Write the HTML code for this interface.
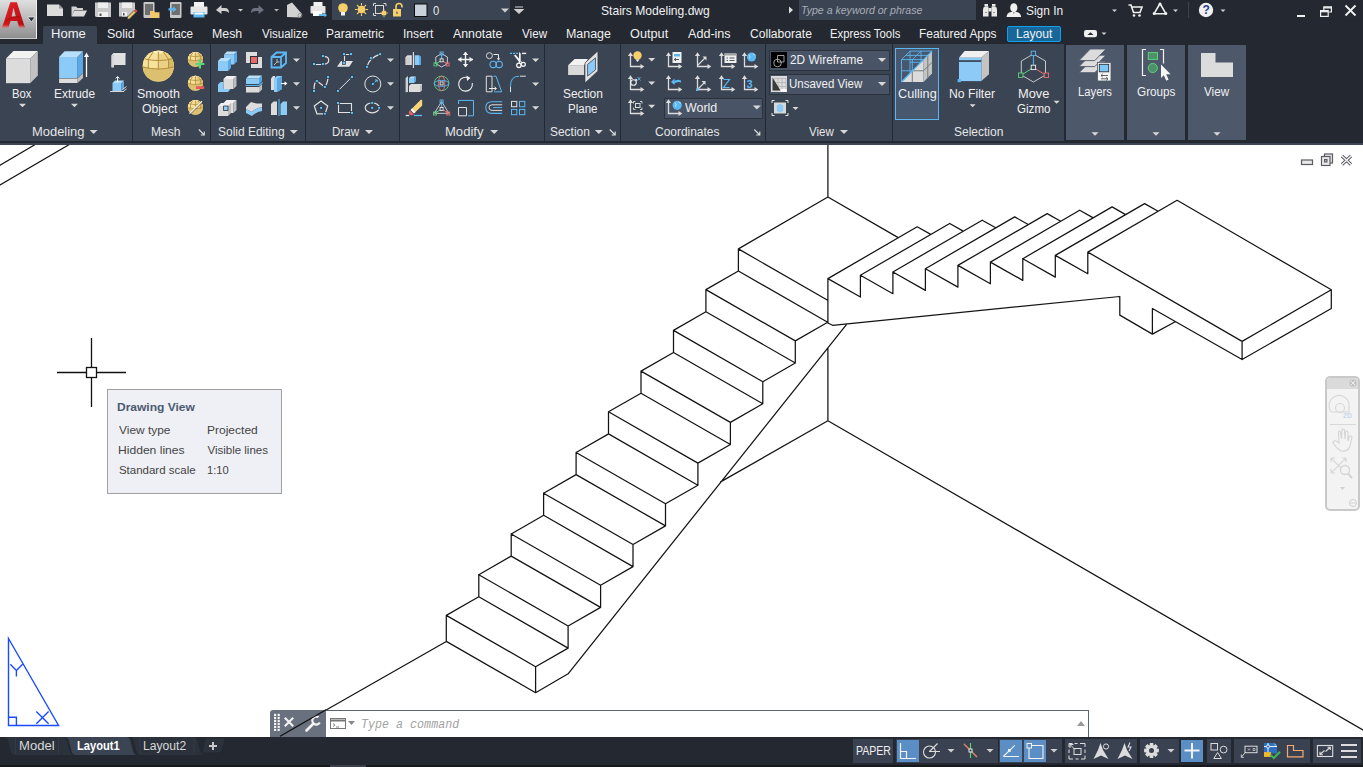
<!DOCTYPE html><html><head><meta charset="utf-8"><title>Stairs Modeling.dwg</title><style>
*{margin:0;padding:0;box-sizing:border-box}
html,body{width:1363px;height:767px;overflow:hidden;background:#232831;font-family:"Liberation Sans",sans-serif}
.a{position:absolute}
.t{position:absolute;white-space:nowrap;line-height:1.117;transform-origin:0 0;font-family:"Liberation Sans",sans-serif}
svg{position:absolute;overflow:visible}
</style></head><body>
<div class="a" style="left:0;top:145px;width:1363px;height:592px;background:#fff;overflow:hidden">
<svg width="1363" height="592" style="left:0;top:0"><path d="M446.3 470.4L535.6 521.7 M446.3 470.4L446.3 496.4 M446.3 496.4L535.6 547.7 M446.3 470.4L478.8 451.8 M535.6 521.7L535.6 547.7 M535.6 521.7L568.1 503.1 M478.8 429.7L568.1 481.0 M478.8 429.7L478.8 451.8 M478.8 451.8L568.1 503.1 M478.8 429.7L511.2 411.1 M568.1 481.0L568.1 503.1 M568.1 481.0L600.6 462.4 M511.2 389.0L600.6 440.3 M511.2 389.0L511.2 411.1 M511.2 411.1L600.6 462.4 M511.2 389.0L543.7 370.3 M600.6 440.3L600.6 462.4 M600.6 440.3L633.0 421.6 M543.6 348.2L633.0 399.5 M543.6 348.2L543.6 370.3 M543.6 370.3L633.0 421.6 M543.6 348.2L576.1 329.6 M633.0 399.5L633.0 421.6 M633.0 399.5L665.5 380.9 M576.1 307.5L665.5 358.8 M576.1 307.5L576.1 329.6 M576.1 329.6L665.5 380.9 M576.1 307.5L608.6 288.9 M665.5 358.8L665.5 380.9 M665.5 358.8L697.9 340.2 M608.5 266.8L697.9 318.1 M608.5 266.8L608.5 288.9 M608.5 288.9L697.9 340.2 M608.5 266.8L641.0 248.2 M697.9 318.1L697.9 340.2 M697.9 318.1L730.4 299.5 M641.0 226.1L730.4 277.4 M641.0 226.1L641.0 248.2 M641.0 248.2L730.4 299.5 M641.0 226.1L673.5 207.5 M730.4 277.4L730.4 299.5 M730.4 277.4L762.8 258.8 M673.5 185.4L762.8 236.7 M673.5 185.4L673.5 207.5 M673.5 207.5L762.8 258.8 M673.5 185.4L705.9 166.7 M762.8 236.7L762.8 258.8 M762.8 236.7L795.3 218.0 M705.9 144.6L795.3 195.9 M705.9 144.6L705.9 166.7 M705.9 166.7L795.3 218.0 M705.9 144.6L738.4 126.0 M795.3 195.9L795.3 218.0 M795.3 195.9L827.7 177.3 M738.4 103.9L827.7 155.2 M738.4 103.9L738.4 126.0 M738.4 126.0L827.7 177.3 M738.4 103.9L827.9 52.0 M827.9 52.0L898.2 92.6 M827.9 133.6L827.9 178.0 M827.9 178.0L832.6 180.3 M535.6 547.7L568.1 528.8 M568.1 528.8L847.0 178.9 M827.9 133.6L917.2 81.8 M827.9 133.6L860.4 152.0 M860.4 152.0L860.4 130.3 M917.2 81.8L930.7 89.4 M860.4 130.3L949.7 78.5 M860.4 130.3L892.9 148.7 M892.9 148.7L892.9 127.0 M949.7 78.5L963.2 86.1 M892.9 127.0L982.2 75.2 M892.9 127.0L925.4 145.4 M925.4 145.4L925.4 123.7 M982.2 75.2L995.7 82.8 M925.4 123.7L1014.7 71.9 M925.4 123.7L957.9 142.1 M957.9 142.1L957.9 120.4 M1014.7 71.9L1028.2 79.5 M957.9 120.4L1047.2 68.6 M957.9 120.4L990.4 138.8 M990.4 138.8L990.4 117.1 M1047.2 68.6L1060.7 76.2 M990.4 117.1L1079.7 65.2 M990.4 117.1L1022.8 135.4 M1022.8 135.4L1022.8 113.7 M1079.7 65.2L1093.2 72.9 M1022.8 113.7L1112.1 61.9 M1022.8 113.7L1055.3 132.1 M1055.3 132.1L1055.3 110.4 M1112.1 61.9L1125.6 69.6 M1055.3 110.4L1144.6 58.6 M1055.3 110.4L1087.8 128.8 M1087.8 128.8L1087.8 107.1 M1144.6 58.6L1158.1 66.3 M1087.8 107.1L1177.1 55.3 M1177.1 55.3L1331.3 144.8 M1331.3 144.8L1242.1 196.4 M1242.1 196.4L1087.8 107.1 M1331.3 144.8L1331.3 163.5 M1242.1 196.4L1242.1 214.5 M1242.1 214.5L1331.3 163.5 M1242.1 214.5L1152.4 163.5 M832.6 180.3L1119.8 151.5 M1119.8 151.5L1119.8 170.1 M1119.8 170.1L1152.4 189.1 M1152.4 189.1L1152.4 163.5 M1152.4 189.1L1175.2 176.7 M827.9 0.0L827.9 52.0 M827.9 202.9L827.9 275.8 M827.9 275.8L720.6 336.9 M827.9 275.8L1383.0 596.6 M446.3 496.5L280.1 591.3 M0.0 20.3L35.2 -0.5 M0.0 40.0L69.3 -0.5" fill="none" stroke="#141414" stroke-width="1.25" stroke-linecap="round"/></svg>
</div>
<svg width="1363" height="767" style="left:0;top:0"><path d="M57 372.5H86.5M96.5 372.5H126M91.5 338V367.5M91.5 377.5V407" stroke="#111" stroke-width="1.3" fill="none"/><rect x="86.5" y="367.5" width="10" height="10" fill="none" stroke="#111" stroke-width="1.3"/><path d="M8.5 638.5V725.5H58.6Z M8.5 717.3H16.4V725.5 M10.3 664.2L16.4 670.4L22.6 664.2 M16.4 670.4V676.6 M36.3 711.5L48.6 723.8 M48.6 711.5L36.3 723.8" fill="none" stroke="#1a4cff" stroke-width="1.4" stroke-linejoin="miter"/><rect x="1301.5" y="160" width="11" height="4.5" fill="#e8e8e8" stroke="#5a5a64" stroke-width="1.2"/><rect x="1324.5" y="154" width="8" height="9" fill="#e8e8e8" stroke="#5a5a64" stroke-width="1.2"/><rect x="1321.5" y="156.5" width="8.5" height="9" fill="#e8e8e8" stroke="#5a5a64" stroke-width="1.2"/><rect x="1324.5" y="159.5" width="2.5" height="2.5" fill="#aaa" stroke="#5a5a64" stroke-width="1"/><path d="M1342 156L1351 164.5M1351 156L1342 164.5" stroke="#5a5a64" stroke-width="3.2"/><path d="M1342 156L1351 164.5M1351 156L1342 164.5" stroke="#f4f4f4" stroke-width="1.4"/></svg>
<div class="a" style="left:107px;top:389px;width:175px;height:105px;background:#eff0f5;border:1px solid #a0a0a0"></div>
<span class="t" style="left:116.92px;top:401.00px;font-size:11.50px;line-height:12px;color:#4b5a70;font-weight:bold;transform:scaleX(1.0443);">Drawing View</span>
<span class="t" style="left:119.34px;top:424.00px;font-size:11.50px;line-height:12px;color:#444;transform:scaleX(1.0357);">View type</span>
<span class="t" style="left:206.54px;top:424.00px;font-size:11.50px;line-height:12px;color:#444;transform:scaleX(1.0443);">Projected</span>
<span class="t" style="left:118.43px;top:444.00px;font-size:11.50px;line-height:12px;color:#444;transform:scaleX(1.0519);">Hidden lines</span>
<span class="t" style="left:207.44px;top:444.00px;font-size:11.50px;line-height:12px;color:#444;">Visible lines</span>
<span class="t" style="left:118.88px;top:464.00px;font-size:11.50px;line-height:12px;color:#444;">Standard scale</span>
<span class="t" style="left:206.67px;top:464.00px;font-size:11.50px;line-height:12px;color:#444;transform:scaleX(0.9667);">1:10</span>
<div class="a" style="left:1325px;top:376px;width:35px;height:135px;background:#f3f3f3;border:2px solid #c9c9c9;border-radius:5px;overflow:hidden"><div class="a" style="left:0;top:0;width:31px;height:11px;background:#dadada"></div></div>
<svg width="1363" height="767" style="left:0;top:0"><circle cx="1353" cy="383" r="3.5" fill="#c4c4c4"/><path d="M1351 381L1355 385M1355 381L1351 385" stroke="#f3f3f3" stroke-width="0.9"/><path d="M1331.5 412 A10 10 0 1 1 1349 404 L1349 412 Z" fill="none" stroke="#d8d8d8" stroke-width="1.2"/><circle cx="1340" cy="408" r="4.5" fill="none" stroke="#d8d8d8" stroke-width="1.2"/><text x="1343" y="418" font-size="7" font-weight="bold" fill="#c9d6ea" font-family="Liberation Sans">2D</text><line x1="1330" y1="424.5" x2="1356" y2="424.5" stroke="#d8d8d8"/><path d="M1333 443 Q1336 448 1341 451 Q1348 452 1350 446 L1352 437 Q1351 435 1349 437 L1348 441 L1348 432 Q1347 430 1345.5 432 L1345 439 L1344.5 430 Q1343 428 1342 430 L1341.5 439 L1340.5 432 Q1339.5 430 1338.5 432 L1339 443 Q1336 440 1334 441 Z" fill="none" stroke="#d4d4d4" stroke-width="1.1"/><path d="M1331 458L1346 473M1346 458L1331 473M1331 458h4M1331 458v4M1346 458h-4M1346 458v4M1331 473h4M1331 473v-4" fill="none" stroke="#d8d8d8" stroke-width="1.2"/><circle cx="1345" cy="470" r="4.5" fill="#f3f3f3" stroke="#d4d4d4" stroke-width="1.3"/><path d="M1348 473.5L1352 478" stroke="#d4d4d4" stroke-width="2"/><path d="M1340 487h5l-2.5 3z" fill="#d0d0d0"/><circle cx="1353" cy="503" r="3.5" fill="none" stroke="#d0d0d0"/><path d="M1350.5 503h5" stroke="#d0d0d0"/></svg>
<div class="a" style="left:270px;top:710px;width:56px;height:27px;background:rgba(90,98,112,0.9);border-radius:3px 0 0 0"></div>
<div class="a" style="left:326px;top:710px;width:763px;height:27px;background:#fff;border:1px solid #5a6270;border-left:none;border-bottom:none"></div>
<svg width="1363" height="767" style="left:0;top:0"><rect x="274.0" y="713.8" width="2.2" height="2.2" fill="#f2f2f2"/><rect x="274.0" y="716.8" width="2.2" height="2.2" fill="#f2f2f2"/><rect x="274.0" y="719.8" width="2.2" height="2.2" fill="#f2f2f2"/><rect x="274.0" y="722.8" width="2.2" height="2.2" fill="#f2f2f2"/><rect x="274.0" y="725.8" width="2.2" height="2.2" fill="#f2f2f2"/><rect x="274.0" y="728.8" width="2.2" height="2.2" fill="#f2f2f2"/><rect x="277.6" y="713.8" width="2.2" height="2.2" fill="#f2f2f2"/><rect x="277.6" y="716.8" width="2.2" height="2.2" fill="#f2f2f2"/><rect x="277.6" y="719.8" width="2.2" height="2.2" fill="#f2f2f2"/><rect x="277.6" y="722.8" width="2.2" height="2.2" fill="#f2f2f2"/><rect x="277.6" y="725.8" width="2.2" height="2.2" fill="#f2f2f2"/><rect x="277.6" y="728.8" width="2.2" height="2.2" fill="#f2f2f2"/><path d="M284.8 717.8L293.2 726.2M293.2 717.8L284.8 726.2" stroke="#f2f2f2" stroke-width="2.1"/><path d="M306.5 730.5L313 724" stroke="#f2f2f2" stroke-width="2.6" stroke-linecap="round"/><path d="M318.5 717.2 A4 4 0 1 0 319.8 722.5" fill="none" stroke="#f2f2f2" stroke-width="2.2"/><path d="M280.1 736.3L326 709.8" stroke="#141414" stroke-width="1.25"/><rect x="330.5" y="718.5" width="15" height="10" fill="#fff" stroke="#777" stroke-width="1"/><path d="M330.5 720.5h15" stroke="#777" stroke-width="2"/><path d="M333 723.5l2 1.5l-2 1.5M336 727h3" fill="none" stroke="#777" stroke-width="0.9"/><path d="M348 721h7l-3.5 4z" fill="#888"/><path d="M1077 726h8l-4 -5z" fill="#999"/></svg>
<span class="t" style="left:361.33px;top:718.00px;font-size:12.00px;line-height:14px;color:#a3a3a3;font-style:italic;font-family:'Liberation Mono',monospace;transform:scaleX(0.9739);">Type a command</span>
<div class="a" style="left:0;top:0;width:1363px;height:44px;background:#232831"></div>
<div class="a" style="left:0;top:0;width:37px;height:38.5px;background:linear-gradient(#e0e0e0,#b9b9b9 50%,#8e8e8e);border-right:1px solid #f0f0f0;border-bottom:1px solid #c8c8c8"></div>
<svg width="40" height="40" style="left:0;top:0"><defs><linearGradient id="ag" x1="0" y1="0" x2="1" y2="1"><stop offset="0" stop-color="#e8262b"/><stop offset="0.6" stop-color="#c8141a"/><stop offset="1" stop-color="#a80c12"/></linearGradient><linearGradient id="al" x1="0" y1="0" x2="0" y2="1"><stop offset="0.55" stop-color="#d41a20" stop-opacity="0"/><stop offset="1" stop-color="#f49a9a"/></linearGradient></defs><path d="M10.3 2.2H16.9L24.8 27.2H19.2L17.2 21H10.6L8.3 27.2H2.2Z M13.5 7.8L11.6 16.5H15.8Z" fill="url(#ag)" fill-rule="evenodd"/><path d="M2.2 27.2L5 19H10L8.3 27.2Z M19.2 27.2L17.4 20.5H21.8L24.8 27.2Z" fill="url(#al)" opacity="0.8"/><path d="M5.5 21.3Q12 16 19.5 16.8" stroke="#9a0c10" stroke-width="1" fill="none" opacity="0.8"/><path d="M27.6 17H35.2L31.4 21.9Z" fill="#2c323b" stroke="#f4f4f4" stroke-width="0.7"/></svg>
<svg width="340" height="22" style="left:0;top:0"><path d="M47 4.5H59L63 8.5V16H47Z" fill="#dcdcdc"/><path d="M59 4.5V8.5H63" fill="#9a9a9a"/><path d="M71.5 6.5H76L77.5 8H83V10H74.5L72 16H71.5Z" fill="#d0d0d0"/><path d="M74.5 10.5H87L84 16.5H71.5Z" fill="#dcdcdc"/><path d="M95 2.5H111V17H96L95 16Z" fill="#c8c8c8"/><rect x="98" y="2.5" width="10" height="5.5" fill="#eeeeee"/><rect x="98" y="12" width="10" height="5" fill="#f2f2f2"/><rect x="99.5" y="13.5" width="2" height="2.5" fill="#555"/><path d="M119 2.5H135V10L128.5 16.5H119Z" fill="#c8c8c8"/><rect x="122" y="2.5" width="10" height="5.5" fill="#eeeeee"/><path d="M122 12H127V16.5H122Z" fill="#f0f0f0"/><path d="M123 13H124.5V15.5H123Z" fill="#555"/><path d="M127.5 17L134 10.5L136 12.5L129.5 19L127.3 19.2Z" fill="#f0c86e" stroke="#232831" stroke-width="0.6"/><path d="M134 10.5L135.5 9L137.5 11L136 12.5Z" fill="#e8525a"/><rect x="143.5" y="2" width="11" height="16" rx="1.2" fill="#c8c8c8"/><rect x="145" y="4" width="8" height="11" fill="#6e6e6e"/><path d="M150 11H154L155 12.3H159.5V18H150Z" fill="#f0c86e"/><rect x="170" y="2" width="11.5" height="16" rx="1.2" fill="#c8c8c8"/><rect x="171.6" y="4" width="8.3" height="11" fill="#6e6e6e"/><path d="M168.5 8.2H173V6.2L176.5 9.3L173 12.4V10.4H168.5Z" fill="#59b6f2"/><rect x="194" y="2" width="10" height="5" fill="#f2f2f2"/><rect x="190.5" y="6.5" width="17" height="8" rx="1" fill="#e6e6e6"/><rect x="193.5" y="12" width="11" height="5.5" fill="#5fb8f2"/><rect x="194.5" y="12.5" width="9" height="2" fill="#ffffff"/><path d="M216 10L221.5 5V8H225Q229 8 229 13L227 11.5Q226 11 224 11H221.5V14Z" fill="#d0d0d0"/><path d="M238 9h5l-2.5 2.5z" fill="#d0d0d0"/><path d="M264 10L258.5 5V8H255Q251 8 251 13L253 11.5Q254 11 256 11H258.5V14Z" fill="#6c737e"/><path d="M274 9h5l-2.5 2.5z" fill="#b0b0b0"/><path d="M287 5L292 2.5L302 14L300 17.5L287 17Z" fill="#d2d2d2"/><circle cx="300" cy="15.5" r="2" fill="none" stroke="#888" stroke-width="0.8"/><rect x="313.5" y="2" width="9" height="4.5" fill="#f2f2f2"/><rect x="310.5" y="6" width="15" height="7.5" rx="1" fill="#e6e6e6"/><rect x="313" y="11" width="9" height="5" fill="#fff"/><path d="M319 14H324.5V12.5L327 15L324.5 17.5V16H319Z" fill="#5fb8f2"/></svg>
<div class="a" style="left:332px;top:0;width:178px;height:20px;background:#3b4453"></div>
<svg width="1363" height="22" style="left:0;top:0"><circle cx="343" cy="8" r="4.8" fill="#f7cf6a"/><path d="M341 12H345V15.5H341Z" fill="#f4f4f4"/><circle cx="361.5" cy="9.5" r="3.8" fill="#f7cf6a"/><path d="M361.5 3v2.5M361.5 13.5V16M355 9.5h2.5M365.5 9.5H368M357 5l1.8 1.8M364.2 12.2L366 14M357 14l1.8-1.8M364.2 6.8L366 5" stroke="#f7cf6a" stroke-width="1.1"/><path d="M373.5 6V3.5H376M383.5 3.5H386V6M373.5 13V15.5H376" stroke="#d8d8d8" stroke-width="1" fill="none"/><rect x="375.5" y="5.5" width="8" height="8" fill="none" stroke="#d8d8d8"/><circle cx="384" cy="13" r="2.6" fill="#f7cf6a"/><path d="M384 8.8v1.2M384 16v1.2M379.8 13h1.2M387 13h1.2" stroke="#f7cf6a" stroke-width="0.8"/><path d="M396 9.5V6.5A3 3 0 0 1 402 6.5V7.5" stroke="#f7cf6a" stroke-width="1.6" fill="none"/><rect x="393" y="9" width="8" height="7.5" fill="#f7cf6a"/><rect x="396.5" y="11.5" width="1" height="2.5" fill="#3b4453"/><rect x="414.5" y="4" width="12.5" height="12.5" fill="#c9d2da" stroke="#0b0b0b" stroke-width="1"/><path d="M501 8.5h8l-4 4z" fill="#d0d0d0"/><path d="M515 7h8M515 9.5h8l-4 3.8z" stroke="#d0d0d0" stroke-width="1.1" fill="#d0d0d0"/></svg>
<span class="t" style="left:432.75px;top:4.00px;font-size:12.00px;line-height:14px;color:#e8e8e8;transform:scaleX(0.9375);">0</span>
<span class="t" style="left:601.46px;top:3.00px;font-size:12.80px;line-height:15px;color:#f0f0f0;transform:scaleX(0.9442);">Stairs Modeling.dwg</span>
<svg width="1363" height="22" style="left:0;top:0"><path d="M789 6.5V13.5L793 10Z" fill="#e0e0e0"/></svg>
<div class="a" style="left:799px;top:0;width:177px;height:20px;background:#3b4453"></div>
<span class="t" style="left:801.05px;top:4.00px;font-size:11.50px;line-height:12px;color:#a8adb6;font-style:italic;transform:scaleX(0.9186);">Type a keyword or phrase</span>
<svg width="1363" height="22" style="left:0;top:0"><path d="M983 9.5Q983 7 985 6.5H988.5V16.5H983Z M991.5 6.5H995Q997 7 997 9.5V16.5H991.5Z" fill="#e8e8e8"/><path d="M984.5 4H988V6.5H984.5ZM992 4H995.5V6.5H992ZM988.5 8H991.5V11.5H988.5Z" fill="#e8e8e8"/><path d="M985 12.5H987M993 12.5H995" stroke="#888" stroke-width="0.8"/><ellipse cx="1013.8" cy="7.8" rx="3.6" ry="4.6" fill="#f0f0f0"/><path d="M1006.5 17Q1007 12.5 1011 12H1016.6Q1020.6 12.5 1021.2 17Z" fill="#f0f0f0"/><path d="M1012.8 12.2L1013.8 14L1014.8 12.2Z" fill="#777"/><path d="M1112 9.5h5l-2.5 2.5z" fill="#d0d0d0"/><path d="M1128.5 5H1131L1133.5 12.5H1140L1142 7H1132" stroke="#f0f0f0" stroke-width="1.6" fill="none"/><circle cx="1134" cy="15.5" r="1.3" fill="#f0f0f0"/><circle cx="1139.5" cy="15.5" r="1.3" fill="#f0f0f0"/><path d="M1160 3.5L1154 13.8H1166Z" fill="none" stroke="#f0f0f0" stroke-width="1.6" stroke-linejoin="round"/><circle cx="1160" cy="4" r="1.5" fill="#f0f0f0"/><circle cx="1154.2" cy="13.6" r="1.5" fill="#f0f0f0"/><circle cx="1165.8" cy="13.6" r="1.5" fill="#f0f0f0"/><path d="M1173 9.5h5l-2.5 2.5z" fill="#d0d0d0"/><rect x="1188" y="2" width="1" height="16" fill="#3d434c"/><circle cx="1206" cy="10" r="7.2" fill="#f0f0f0"/><text x="1202.6" y="14.4" font-family="Liberation Sans" font-weight="bold" font-size="12" fill="#1f3f8f">?</text><path d="M1220.5 9.5h5l-2.5 2.5z" fill="#d0d0d0"/><path d="M1297 16H1305" stroke="#f0f0f0" stroke-width="2"/><path d="M1323.8 10V6.8H1331.4V12H1328.8" fill="none" stroke="#f0f0f0" stroke-width="1.2"/><path d="M1323.8 7.8H1331.4" stroke="#f0f0f0" stroke-width="1.4"/><rect x="1320.6" y="10.6" width="7.6" height="5.8" fill="none" stroke="#f0f0f0" stroke-width="1.2"/><path d="M1320.6 11.6H1328.2" stroke="#f0f0f0" stroke-width="1.4"/><path d="M1345.5 5.5L1355.5 15.5M1355.5 5.5L1345.5 15.5" stroke="#f0f0f0" stroke-width="1.9"/></svg>
<span class="t" style="left:1026.46px;top:4.00px;font-size:12.50px;line-height:14px;color:#f0f0f0;transform:scaleX(0.9547);">Sign In</span>
<div class="a" style="left:43px;top:26px;width:54px;height:18px;background:#3b4453;border-radius:2px 2px 0 0"></div>
<div class="a" style="left:1007px;top:25.5px;width:54px;height:16px;background:#17679a;border:1px solid #13a0ea;border-radius:2px"></div>
<span class="t" style="left:51.16px;top:27.00px;font-size:12.50px;line-height:14px;color:#f0f0f0;transform:scaleX(1.0425);">Home</span>
<span class="t" style="left:107.04px;top:27.00px;font-size:12.50px;line-height:14px;color:#f0f0f0;">Solid</span>
<span class="t" style="left:153.48px;top:27.00px;font-size:12.50px;line-height:14px;color:#f0f0f0;transform:scaleX(0.9300);">Surface</span>
<span class="t" style="left:212.21px;top:27.00px;font-size:12.50px;line-height:14px;color:#f0f0f0;transform:scaleX(0.9878);">Mesh</span>
<span class="t" style="left:261.94px;top:27.00px;font-size:12.50px;line-height:14px;color:#f0f0f0;transform:scaleX(0.9210);">Visualize</span>
<span class="t" style="left:326.04px;top:27.00px;font-size:12.50px;line-height:14px;color:#f0f0f0;transform:scaleX(0.9590);">Parametric</span>
<span class="t" style="left:402.81px;top:27.00px;font-size:12.50px;line-height:14px;color:#f0f0f0;transform:scaleX(0.9680);">Insert</span>
<span class="t" style="left:453.20px;top:27.00px;font-size:12.50px;line-height:14px;color:#f0f0f0;transform:scaleX(0.9871);">Annotate</span>
<span class="t" style="left:521.74px;top:27.00px;font-size:12.50px;line-height:14px;color:#f0f0f0;transform:scaleX(0.9324);">View</span>
<span class="t" style="left:565.81px;top:27.00px;font-size:12.50px;line-height:14px;color:#f0f0f0;transform:scaleX(0.9948);">Manage</span>
<span class="t" style="left:629.63px;top:27.00px;font-size:12.50px;line-height:14px;color:#f0f0f0;transform:scaleX(1.0169);">Output</span>
<span class="t" style="left:688.00px;top:27.00px;font-size:12.50px;line-height:14px;color:#f0f0f0;transform:scaleX(1.0063);">Add-ins</span>
<span class="t" style="left:749.59px;top:27.00px;font-size:12.50px;line-height:14px;color:#f0f0f0;transform:scaleX(0.9689);">Collaborate</span>
<span class="t" style="left:830.09px;top:27.00px;font-size:12.50px;line-height:14px;color:#f0f0f0;transform:scaleX(0.9064);">Express Tools</span>
<span class="t" style="left:919.05px;top:27.00px;font-size:12.50px;line-height:14px;color:#f0f0f0;transform:scaleX(0.9540);">Featured Apps</span>
<span class="t" style="left:1015.63px;top:27.00px;font-size:12.50px;line-height:14px;color:#f0f0f0;transform:scaleX(0.9715);">Layout</span>
<svg width="1363" height="44" style="left:0;top:0"><rect x="1084" y="30" width="13" height="7.2" rx="2.2" fill="#f0f0f0"/><path d="M1087.5 35h6l-3-2.8z" fill="#232831"/><path d="M1101.5 32.5h5l-2.5 2.5z" fill="#d0d0d0"/></svg>
<div class="a" style="left:0;top:44px;width:1064px;height:97px;background:#3b4453"></div>
<div class="a" style="left:0;top:141px;width:1363px;height:2px;background:#232831"></div>
<div class="a" style="left:0;top:143px;width:1363px;height:2px;background:#3b4453"></div>
<div class="a" style="left:132px;top:44px;width:1px;height:97px;background:#232831"></div>
<div class="a" style="left:210px;top:44px;width:1px;height:97px;background:#232831"></div>
<div class="a" style="left:305px;top:44px;width:1px;height:97px;background:#232831"></div>
<div class="a" style="left:399px;top:44px;width:1px;height:97px;background:#232831"></div>
<div class="a" style="left:544px;top:44px;width:1px;height:97px;background:#232831"></div>
<div class="a" style="left:620px;top:44px;width:1px;height:97px;background:#232831"></div>
<div class="a" style="left:765px;top:44px;width:1px;height:97px;background:#232831"></div>
<div class="a" style="left:892px;top:44px;width:1px;height:97px;background:#232831"></div>
<div class="a" style="left:1066px;top:45px;width:58px;height:95px;background:#4d586a"></div>
<div class="a" style="left:1127px;top:45px;width:58px;height:95px;background:#4d586a"></div>
<div class="a" style="left:1188px;top:45px;width:58px;height:95px;background:#4d586a"></div>
<div class="a" style="left:895px;top:48px;width:44px;height:72px;background:#47576e;border:1px solid #5eb6f0"></div>
<div class="a" style="left:768.5px;top:49.5px;width:121px;height:21px;background:#4a5467;border:1px solid #2d333d"></div>
<div class="a" style="left:768.5px;top:73.5px;width:121px;height:21px;background:#4a5467;border:1px solid #2d333d"></div>
<div class="a" style="left:663.5px;top:97.5px;width:99px;height:21px;background:#4a5467;border:1px solid #2d333d"></div>
<span class="t" style="left:32.36px;top:125.00px;font-size:12.30px;line-height:14px;color:#e6e6e6;transform:scaleX(1.0521);">Modeling</span>
<span class="t" style="left:150.73px;top:125.00px;font-size:12.30px;line-height:14px;color:#e6e6e6;transform:scaleX(0.9827);">Mesh</span>
<span class="t" style="left:217.66px;top:125.00px;font-size:12.30px;line-height:14px;color:#e6e6e6;transform:scaleX(0.9741);">Solid Editing</span>
<span class="t" style="left:331.77px;top:125.00px;font-size:12.30px;line-height:14px;color:#e6e6e6;transform:scaleX(0.9410);">Draw</span>
<span class="t" style="left:445.46px;top:125.00px;font-size:12.30px;line-height:14px;color:#e6e6e6;transform:scaleX(1.0613);">Modify</span>
<span class="t" style="left:549.66px;top:125.00px;font-size:12.30px;line-height:14px;color:#e6e6e6;transform:scaleX(0.9706);">Section</span>
<span class="t" style="left:655.00px;top:125.00px;font-size:12.30px;line-height:14px;color:#e6e6e6;transform:scaleX(0.9716);">Coordinates</span>
<span class="t" style="left:808.94px;top:125.00px;font-size:12.30px;line-height:14px;color:#e6e6e6;transform:scaleX(0.9362);">View</span>
<span class="t" style="left:954.46px;top:125.00px;font-size:12.30px;line-height:14px;color:#e6e6e6;transform:scaleX(0.9744);">Selection</span>
<span class="t" style="left:11.70px;top:87.00px;font-size:12.30px;line-height:14px;color:#f0f0f0;transform:scaleX(0.9149);">Box</span>
<span class="t" style="left:53.65px;top:87.00px;font-size:12.30px;line-height:14px;color:#f0f0f0;transform:scaleX(0.9673);">Extrude</span>
<span class="t" style="left:137.44px;top:87.00px;font-size:12.30px;line-height:14px;color:#f0f0f0;transform:scaleX(1.0117);">Smooth</span>
<span class="t" style="left:141.94px;top:102.00px;font-size:12.30px;line-height:14px;color:#f0f0f0;">Object</span>
<span class="t" style="left:562.66px;top:87.00px;font-size:12.30px;line-height:14px;color:#f0f0f0;transform:scaleX(0.9706);">Section</span>
<span class="t" style="left:567.58px;top:102.00px;font-size:12.30px;line-height:14px;color:#f0f0f0;transform:scaleX(0.9368);">Plane</span>
<span class="t" style="left:898.07px;top:87.00px;font-size:12.30px;line-height:14px;color:#f0f0f0;transform:scaleX(1.0287);">Culling</span>
<span class="t" style="left:949.32px;top:87.00px;font-size:12.30px;line-height:14px;color:#f0f0f0;transform:scaleX(0.9920);">No Filter</span>
<span class="t" style="left:1018.37px;top:87.00px;font-size:12.30px;line-height:14px;color:#f0f0f0;transform:scaleX(1.0443);">Move</span>
<span class="t" style="left:1016.92px;top:102.00px;font-size:12.30px;line-height:14px;color:#f0f0f0;transform:scaleX(0.9437);">Gizmo</span>
<span class="t" style="left:1077.60px;top:85.00px;font-size:12.30px;line-height:14px;color:#f0f0f0;transform:scaleX(0.9159);">Layers</span>
<span class="t" style="left:1136.91px;top:85.00px;font-size:12.30px;line-height:14px;color:#f0f0f0;transform:scaleX(0.9542);">Groups</span>
<span class="t" style="left:1203.94px;top:85.00px;font-size:12.30px;line-height:14px;color:#f0f0f0;transform:scaleX(0.9476);">View</span>
<span class="t" style="left:789.51px;top:53.00px;font-size:12.00px;line-height:14px;color:#f0f0f0;transform:scaleX(0.9871);">2D Wireframe</span>
<span class="t" style="left:788.74px;top:77.00px;font-size:12.00px;line-height:14px;color:#f0f0f0;transform:scaleX(0.9577);">Unsaved View</span>
<span class="t" style="left:685.44px;top:101.00px;font-size:12.30px;line-height:14px;color:#f0f0f0;transform:scaleX(1.0098);">World</span>
<svg width="1363" height="145" style="left:0;top:0"><path d="M6 58.5H30.2V83.2H6Z" fill="#dcdcdc"/><path d="M6 58.5L13.5 51H37.8L30.2 58.5Z" fill="#f2f2f2"/><path d="M30.2 58.5L37.8 51V75.5L30.2 83.2Z" fill="#c2c2c2"/><path d="M59.1 78.5H77.5V83H59.1Z" fill="#dedede"/><path d="M77.5 78.5L83 73V78L77.5 83Z" fill="#bdbdbd"/><path d="M59.1 57H77.5V78H59.1Z" fill="#8ccbf8"/><path d="M59.1 57L64.6 51.2H83L77.5 57Z" fill="#b9e0fb"/><path d="M77.5 57L83 51.2V72.8L77.5 78Z" fill="#5ba9e4"/><path d="M86.5 77V55.5" stroke="#fff" stroke-width="1.3"/><path d="M84 57L86.5 52.5L89 57Z" fill="#fff"/><path d="M111.5 55.5L113.5 53V65L111.5 67.5Z" fill="#cfcfcf"/><path d="M113.5 53.5H125.5V65H113.5Z" fill="#e0e0e0"/><path d="M111.5 55.5L113.5 53.2H125.5V54.5H114Z" fill="#f2f2f2"/><path d="M111.5 55.5H114V67.5H111.5Z" fill="#d8d8d8"/><path d="M112.5 83H121.5V91H112.5Z" fill="#8ccbf8"/><path d="M112.5 83L115 80.5H124L121.5 83Z" fill="#b9e0fb"/><path d="M121.5 83L124 80.5V88.5L121.5 91Z" fill="#5ba9e4"/><path d="M117.6 82V77M115.8 78.5L117.6 76.5L119.4 78.5" stroke="#fff" stroke-width="1" fill="none"/><path d="M110 91.5H124M122.5 89.5L126.5 86.5M123.5 91L126.5 89" stroke="#e8e8e8" stroke-width="0.9"/><path d="M19.0 103.8H26.0L22.5 107.2Z" fill="#d8d8d8"/><path d="M71.0 103.8H78.0L74.5 107.2Z" fill="#d8d8d8"/><path d="M89.6 130.0H97.6L93.6 134.0Z" fill="#d8d8d8"/><defs><radialGradient id="sg" cx="0.4" cy="0.3" r="0.8"><stop offset="0" stop-color="#f2d98f"/><stop offset="1" stop-color="#d3b05c"/></radialGradient></defs><clipPath id="bs1"><circle cx="158.3" cy="66.3" r="15.6"/></clipPath><g clip-path="url(#bs1)"><rect x="142.7" y="50.7" width="31.2" height="31.2" fill="#e3c877"/><path d="M142.3 68.3Q158.3 71.3 174.3 68.3V16H142.3Z" fill="#e6cc7c"/><path d="M142.3 75.3Q158.3 85.3 174.3 75.3V17H142.3Z" fill="#dcc06f"/><path d="M142.3 50.3H158.3V68.8Q150.3 68.3 142.3 66.3Z" fill="#f7e29c"/><path d="M158.3 50.3H174.3V66.3Q166.3 68.3 158.3 68.8Z" fill="#ebd186"/><path d="M168.5 58.3L174.3 57.3V67.3L168.5 68.3Z" fill="#d8b964"/><ellipse cx="158.3" cy="51.5" rx="5.0" ry="2.0" fill="#fbeec0"/><path d="M142.3 66.8Q158.3 71.3 174.3 66.8M144.3 58.8Q158.3 62.3 172.3 58.8M158.3 51.8V69.3M148.3 59.3V68.3M168.5 59.3V68.3M153.3 51.8L148.3 59.3M163.3 51.8L168.5 59.3" stroke="#b48f3c" stroke-width="1.00" fill="none"/></g><clipPath id="bs2"><circle cx="195.4" cy="59.5" r="7.6"/></clipPath><g clip-path="url(#bs2)"><rect x="187.8" y="51.9" width="15.2" height="15.2" fill="#e3c877"/><path d="M187.6 60.5Q195.4 61.9 203.2 60.5V16H187.6Z" fill="#e6cc7c"/><path d="M187.6 63.9Q195.4 68.8 203.2 63.9V17H187.6Z" fill="#dcc06f"/><path d="M187.6 51.7H195.4V60.7Q191.5 60.5 187.6 59.5Z" fill="#f7e29c"/><path d="M195.4 51.7H203.2V59.5Q199.3 60.5 195.4 60.7Z" fill="#ebd186"/><path d="M200.4 55.6L203.2 55.1V60.0L200.4 60.5Z" fill="#d8b964"/><ellipse cx="195.4" cy="52.3" rx="2.4" ry="1.0" fill="#fbeec0"/><path d="M187.6 59.7Q195.4 61.9 203.2 59.7M188.6 55.8Q195.4 57.6 202.2 55.8M195.4 52.4V61.0M190.5 56.1V60.5M200.4 56.1V60.5M193.0 52.4L190.5 56.1M197.8 52.4L200.4 56.1" stroke="#b48f3c" stroke-width="0.80" fill="none"/></g><path d="M199.9 59.5V68.5M195.4 64H204.4" stroke="#5ad37a" stroke-width="2.2"/><clipPath id="bs3"><circle cx="195.4" cy="83.3" r="7.6"/></clipPath><g clip-path="url(#bs3)"><rect x="187.8" y="75.7" width="15.2" height="15.2" fill="#e3c877"/><path d="M187.6 84.3Q195.4 85.7 203.2 84.3V16H187.6Z" fill="#e6cc7c"/><path d="M187.6 87.7Q195.4 92.6 203.2 87.7V17H187.6Z" fill="#dcc06f"/><path d="M187.6 75.5H195.4V84.5Q191.5 84.3 187.6 83.3Z" fill="#f7e29c"/><path d="M195.4 75.5H203.2V83.3Q199.3 84.3 195.4 84.5Z" fill="#ebd186"/><path d="M200.4 79.4L203.2 78.9V83.8L200.4 84.3Z" fill="#d8b964"/><ellipse cx="195.4" cy="76.1" rx="2.4" ry="1.0" fill="#fbeec0"/><path d="M187.6 83.5Q195.4 85.7 203.2 83.5M188.6 79.6Q195.4 81.4 202.2 79.6M195.4 76.2V84.8M190.5 79.9V84.3M200.4 79.9V84.3M193.0 76.2L190.5 79.9M197.8 76.2L200.4 79.9" stroke="#b48f3c" stroke-width="0.80" fill="none"/></g><rect x="196" y="86.2" width="8.2" height="2.8" fill="#e85b5b"/><clipPath id="bs4"><circle cx="195.4" cy="107.5" r="7.6"/></clipPath><g clip-path="url(#bs4)"><rect x="187.8" y="99.9" width="15.2" height="15.2" fill="#e3c877"/><path d="M187.6 108.5Q195.4 109.9 203.2 108.5V16H187.6Z" fill="#e6cc7c"/><path d="M187.6 111.9Q195.4 116.8 203.2 111.9V17H187.6Z" fill="#dcc06f"/><path d="M187.6 99.7H195.4V108.7Q191.5 108.5 187.6 107.5Z" fill="#f7e29c"/><path d="M195.4 99.7H203.2V107.5Q199.3 108.5 195.4 108.7Z" fill="#ebd186"/><path d="M200.4 103.6L203.2 103.1V108.0L200.4 108.5Z" fill="#d8b964"/><ellipse cx="195.4" cy="100.3" rx="2.4" ry="1.0" fill="#fbeec0"/><path d="M187.6 107.7Q195.4 109.9 203.2 107.7M188.6 103.8Q195.4 105.6 202.2 103.8M195.4 100.4V109.0M190.5 104.1V108.5M200.4 104.1V108.5M193.0 100.4L190.5 104.1M197.8 100.4L200.4 104.1" stroke="#b48f3c" stroke-width="0.80" fill="none"/></g><path d="M189.5 113.6L202 101.2" stroke="#f0f0f0" stroke-width="1.2"/><path d="M190.3 114.3L202.8 101.9" stroke="#3b4453" stroke-width="0.6"/><path d="M198.8 129.5L204.3 135.0M204.3 131.5V135.0H200.8" stroke="#e0e0e0" stroke-width="1.1" fill="none"/><path d="M224.0 54.5H234.0V64.5H224.0Z" fill="#8ccbf8"/><path d="M224.0 54.5L227.0 51.5H237.0L234.0 54.5Z" fill="#b9e0fb"/><path d="M234.0 54.5L237.0 51.5V61.5L234.0 64.5Z" fill="#5ba9e4"/><path d="M218.0 61.0H228.0V71.0H218.0Z" fill="#8ccbf8"/><path d="M218.0 61.0L221.0 58.0H231.0L228.0 61.0Z" fill="#b9e0fb"/><path d="M228.0 61.0L231.0 58.0V68.0L228.0 71.0Z" fill="#5ba9e4"/><path d="M246 52H257V63H246Z" fill="#dcdcdc"/><path d="M251 57H262V68H251Z" fill="#dcdcdc"/><path d="M250 56H258V64H250Z" fill="#2b3039"/><path d="M251 57H257V63H251Z" fill="#e86a6a"/><path d="M271.5 57L276.5 52.5H286V63L281 67.5H271.5Z M271.5 57H281V67.5 M281 57L286 52.5" fill="none" stroke="#5cb8f2" stroke-width="1.8"/><path d="M274 65L277 62V59M277 62H279.5" stroke="#e0e0e0" stroke-width="0.8" fill="none"/><path d="M293.0 58.5H300.0L296.5 62.0Z" fill="#d8d8d8"/><path d="M223.5 79.0H233.5V89.0H223.5Z" fill="#dcdcdc"/><path d="M223.5 79.0L226.5 76.0H236.5L233.5 79.0Z" fill="#f0f0f0"/><path d="M233.5 79.0L236.5 76.0V86.0L233.5 89.0Z" fill="#bdbdbd"/><path d="M218 84.5L220.5 82H223.5V89H230.5L228 92H218Z" fill="#8ccbf8"/><path d="M246 78.5L249 75.5H262L259 78.5Z" fill="#b9e0fb"/><path d="M246 78.5H259V84H246Z" fill="#8ccbf8"/><path d="M259 78.5L262 75.5V81L259 84Z" fill="#5ba9e4"/><path d="M245.5 85.5H259L262.5 82.5" stroke="#5cb8f2" stroke-width="1.2" fill="none"/><path d="M246 87H259V92.5H246Z" fill="#dcdcdc"/><path d="M259 87L262 84V89.5L259 92.5Z" fill="#bdbdbd"/><path d="M271 78.5L273 76H275V90H271Z" fill="#dcdcdc"/><path d="M274 78.5L277 76H282V89L277 92H274Z" fill="#8ccbf8"/><path d="M277 78.5L282 76V89L277 92Z" fill="#5ba9e4"/><path d="M281 83.5H286M284.5 81.8L286.5 83.5L284.5 85.2" stroke="#fff" stroke-width="1.1" fill="none"/><path d="M293.0 82.2H300.0L296.5 85.8Z" fill="#d8d8d8"/><path d="M223.5 103.0H233.5V113.0H223.5Z" fill="#dcdcdc"/><path d="M223.5 103.0L226.5 100.0H236.5L233.5 103.0Z" fill="#f0f0f0"/><path d="M233.5 103.0L236.5 100.0V110.0L233.5 113.0Z" fill="#bdbdbd"/><path d="M218.0 106.0H228.0V116.0H218.0Z" fill="#dcdcdc"/><path d="M218.0 106.0L221.0 103.0H231.0L228.0 106.0Z" fill="#f0f0f0"/><path d="M228.0 106.0L231.0 103.0V113.0L228.0 116.0Z" fill="#bdbdbd"/><path d="M223.5 106H228V110.5H223.5Z" fill="#8ccbf8" stroke="#2b3039" stroke-width="0.8"/><path d="M223.5 103H233.5" stroke="#2b3039" stroke-width="0"/><path d="M246 107L251 102Q256 104 262 103.5V107Q256 108 252 112L246 109Z" fill="#dcdcdc"/><path d="M246 109L252 112Q256 108 262 107V111Q257 111.5 252 116L246 113Z" fill="#8ccbf8"/><path d="M271 104L273.5 101.5H277V115H271Z" fill="#dcdcdc"/><path d="M280.5 104L283 101.5H287V115H280.5Z" fill="#8ccbf8"/><path d="M279 99V116" stroke="#5cb8f2" stroke-width="1.1"/><path d="M293.0 106.2H300.0L296.5 109.8Z" fill="#d8d8d8"/><path d="M289.8 130.0H297.8L293.8 134.0Z" fill="#d8d8d8"/><path d="M314 64.5H322.9M324.5 56.3A5 4 0 0 1 324.5 64.2" stroke="#e2e2e2" stroke-width="1.2" fill="none"/><rect x="312.6" y="62.6" width="2.8" height="2.8" fill="#5cc2f7" stroke="#2b3039" stroke-width="0.7"/><rect x="321.5" y="62.6" width="2.8" height="2.8" fill="#5cc2f7" stroke="#2b3039" stroke-width="0.7"/><rect x="321.5" y="54.6" width="2.8" height="2.8" fill="#5cc2f7" stroke="#2b3039" stroke-width="0.7"/><path d="M337 66.8L341 61.1H353L349.2 66.8Z" fill="#e2e2e2"/><path d="M344.5 54.1V63M344 54.5H351" stroke="#e2e2e2" stroke-width="1.1"/><rect x="342.6" y="52.7" width="2.8" height="2.8" fill="#5cc2f7" stroke="#2b3039" stroke-width="0.7"/><rect x="349.6" y="52.7" width="2.8" height="2.8" fill="#5cc2f7" stroke="#2b3039" stroke-width="0.7"/><rect x="342.6" y="61.6" width="2.8" height="2.8" fill="#5cc2f7" stroke="#2b3039" stroke-width="0.7"/><path d="M367 66.8Q369 58 380.2 54.1" stroke="#e2e2e2" stroke-width="1.2" fill="none"/><rect x="365.6" y="65.4" width="2.8" height="2.8" fill="#5cc2f7" stroke="#2b3039" stroke-width="0.7"/><rect x="369.4" y="56.5" width="2.8" height="2.8" fill="#5cc2f7" stroke="#2b3039" stroke-width="0.7"/><rect x="378.8" y="52.7" width="2.8" height="2.8" fill="#5cc2f7" stroke="#2b3039" stroke-width="0.7"/><path d="M387.0 58.5H394.0L390.5 62.0Z" fill="#d8d8d8"/><path d="M314 90.9Q314 82 316.8 80.9L324.8 87Q327.5 84 328.1 76.9" stroke="#e2e2e2" stroke-width="1.2" fill="none"/><rect x="312.6" y="89.5" width="2.8" height="2.8" fill="#5cc2f7" stroke="#2b3039" stroke-width="0.7"/><rect x="315.4" y="79.5" width="2.8" height="2.8" fill="#5cc2f7" stroke="#2b3039" stroke-width="0.7"/><rect x="323.4" y="85.6" width="2.8" height="2.8" fill="#5cc2f7" stroke="#2b3039" stroke-width="0.7"/><rect x="326.7" y="75.5" width="2.8" height="2.8" fill="#5cc2f7" stroke="#2b3039" stroke-width="0.7"/><path d="M337.9 90.9L352 76.9" stroke="#e2e2e2" stroke-width="1"/><rect x="336.5" y="89.5" width="2.8" height="2.8" fill="#5cc2f7" stroke="#2b3039" stroke-width="0.7"/><rect x="350.6" y="75.5" width="2.8" height="2.8" fill="#5cc2f7" stroke="#2b3039" stroke-width="0.7"/><circle cx="372.8" cy="84" r="8" stroke="#e2e2e2" stroke-width="1" fill="none"/><path d="M373 84L377 80M375 80H377.2V82.2" stroke="#5cc2f7" stroke-width="1" fill="none"/><rect x="371.4" y="82.6" width="2.8" height="2.8" fill="#5cc2f7" stroke="#2b3039" stroke-width="0.7"/><path d="M387.0 82.2H394.0L390.5 85.8Z" fill="#d8d8d8"/><path d="M321 101L327.7 105.9L325.1 113.8H316.9L314.3 105.9Z" stroke="#e2e2e2" stroke-width="1.2" fill="none"/><rect x="319.6" y="106.4" width="2.8" height="2.8" fill="#5cc2f7" stroke="#2b3039" stroke-width="0.7"/><rect x="323.4" y="112.3" width="2.8" height="2.8" fill="#5cc2f7" stroke="#2b3039" stroke-width="0.7"/><path d="M338.5 103.5H351.5V112.5H338.5Z" stroke="#e2e2e2" stroke-width="1.1" fill="none"/><rect x="336.5" y="101.5" width="2.8" height="2.8" fill="#5cc2f7" stroke="#2b3039" stroke-width="0.7"/><rect x="350.6" y="111.4" width="2.8" height="2.8" fill="#5cc2f7" stroke="#2b3039" stroke-width="0.7"/><ellipse cx="372.2" cy="107.8" rx="7" ry="5" stroke="#e2e2e2" stroke-width="1.2" fill="none"/><rect x="370.8" y="106.4" width="2.8" height="2.8" fill="#5cc2f7" stroke="#2b3039" stroke-width="0.7"/><rect x="370.8" y="101.4" width="2.8" height="2.8" fill="#5cc2f7" stroke="#2b3039" stroke-width="0.7"/><rect x="377.8" y="106.4" width="2.8" height="2.8" fill="#5cc2f7" stroke="#2b3039" stroke-width="0.7"/><path d="M387.0 106.2H394.0L390.5 109.8Z" fill="#d8d8d8"/><path d="M365.0 130.0H373.0L369.0 134.0Z" fill="#d8d8d8"/><path d="M405.6 57L407.5 55.2H411.8V64.9H405.6Z" fill="#dcdcdc"/><path d="M405.6 57H410V64.9H405.6Z" fill="#cfcfcf"/><path d="M413.4 52V68" stroke="#e8e8e8" stroke-width="1.1"/><path d="M414.6 55.2H419L421 57V64.9H414.6Z" fill="#8ccbf8"/><path d="M419 55.2L421 57V64.9H419Z" fill="#5ba9e4"/><path d="M441.6 53.6L447.4 57V63.7L441.6 67L435.8 63.7V57Z" stroke="#d8d8d8" stroke-width="0.9" fill="none"/><path d="M441.6 60.3V54.5" stroke="#5cb8f2" stroke-width="1"/><path d="M441.6 60.3L436 63.8" stroke="#5ad37a" stroke-width="1"/><path d="M441.6 60.3L447.3 63.8" stroke="#f07272" stroke-width="1"/><rect x="440.1" y="52" width="3" height="3" fill="none" stroke="#5cb8f2" stroke-width="0.9"/><rect x="440.1" y="58.8" width="3" height="3" fill="#3b4453" stroke="#e8e8e8" stroke-width="0.9"/><rect x="434" y="62.9" width="3" height="3" fill="none" stroke="#5ad37a" stroke-width="0.9"/><rect x="446.1" y="62.9" width="3" height="3" fill="none" stroke="#f07272" stroke-width="0.9"/><path d="M465.5 52V67M458 59.5H473" stroke="#f2f2f2" stroke-width="1.4"/><path d="M462.8 55L465.5 51.8L468.2 55ZM462.8 64L465.5 67.2L468.2 64ZM461.5 56.8L458.2 59.5L461.5 62.2ZM469.5 56.8L472.8 59.5L469.5 62.2Z" fill="#f2f2f2"/><circle cx="489.4" cy="55.7" r="3" stroke="#d8d8d8" stroke-width="1" fill="none"/><path d="M493.5 54.5H498.5V59" stroke="#e8e8e8" stroke-width="1" fill="none"/><path d="M496.8 58.3L498.5 60.5L500.2 58.3Z" fill="#e8e8e8"/><circle cx="493.2" cy="64.4" r="3.2" stroke="#5cb8f2" stroke-width="1.1" fill="none"/><circle cx="499.1" cy="64.4" r="3.2" stroke="#5cb8f2" stroke-width="1.1" fill="none"/><path d="M510 53.4H518.5" stroke="#5cb8f2" stroke-width="1.4" stroke-dasharray="2 1"/><path d="M522 53.4H526.2" stroke="#eeeeee" stroke-width="1.4"/><path d="M519 52L520.7 53.5V61.5H519Z" fill="#f4f4f4"/><path d="M514 55.5L515.5 54.5L520.5 60.5L519.3 62.3Z" fill="#f4f4f4"/><circle cx="518.9" cy="65.3" r="2.2" stroke="#f4f4f4" stroke-width="1.3" fill="none"/><circle cx="523.3" cy="64.3" r="2" stroke="#f4f4f4" stroke-width="1.3" fill="none"/><path d="M519.5 61.5L519.2 63.2M520.5 61.5L522 62.6" stroke="#f4f4f4" stroke-width="1.2"/><path d="M532.1 58.5H539.1L535.6 62.0Z" fill="#d8d8d8"/><path d="M405.6 78L408 76V92L405.6 92.2Z" fill="#d0d0d0"/><path d="M409 78H414V83H409Z" fill="#8ccbf8"/><path d="M409 78L411 76.5H416L414 78Z" fill="#b9e0fb"/><path d="M414 78L416 76.5V81.5L414 83Z" fill="#5ba9e4"/><path d="M409 86L411 84H422V90L420 92H409Z" fill="#dcdcdc"/><path d="M420 86L422 84V90L420 92Z" fill="#bdbdbd"/><circle cx="441.6" cy="83.4" r="7.3" stroke="#5ad37a" stroke-width="0.9" fill="none"/><ellipse cx="441.6" cy="83.4" rx="3.2" ry="7.3" stroke="#f07272" stroke-width="0.9" fill="none"/><ellipse cx="441.6" cy="83.4" rx="7.3" ry="3" stroke="#5cb8f2" stroke-width="0.9" fill="none"/><rect x="440.1" y="81.9" width="3" height="3" fill="#3b4453" stroke="#e8e8e8" stroke-width="0.9"/><path d="M469 78.3A6.9 6.9 0 1 0 472.3 83" stroke="#eeeeee" stroke-width="1.1" fill="none"/><path d="M466.5 75.5L470.5 78L467 81Z" fill="#eeeeee"/><path d="M486.3 76.2H492V91.8H486.3Z" stroke="#e0e0e0" stroke-width="1" fill="none"/><path d="M493.5 76.2H496L501.7 91.8H494" stroke="#5cb8f2" stroke-width="1" fill="none"/><path d="M489 88.5H496M494.5 86.8L496.5 88.5L494.5 90.2" stroke="#eeeeee" stroke-width="1" fill="none"/><path d="M510.5 92.2V86M510.5 86Q510.5 76.2 519 76.2" stroke="#5cb8f2" stroke-width="1" fill="none"/><path d="M510.5 92V87" stroke="#e0e0e0" stroke-width="1"/><path d="M520 76.2H525.8" stroke="#e0e0e0" stroke-width="1"/><path d="M532.1 82.5H539.1L535.6 86.0Z" fill="#d8d8d8"/><path d="M411 109.5L420.5 100Q421.5 99.5 422.2 99.8V105.5L414.5 113Z" fill="#f8d57a"/><path d="M410.5 110L412 108.5L415.5 112L414 113.5Z" fill="#ffffff"/><path d="M409.8 110.6L413.8 114.2Q412.5 115.5 411 115.3Q409 115 408.8 113Q408.7 111.5 409.8 110.6Z" fill="#f06262"/><path d="M405.7 115.5H409.2" stroke="#eeeeee" stroke-width="1.3"/><path d="M413.9 115.5H422.1" stroke="#5cb8f2" stroke-width="1.3"/><path d="M441.6 101.5L434.5 113M441.6 101.5L448.7 113M434.5 113.3H448.7" stroke="#d8d8d8" stroke-width="0.9" fill="none"/><path d="M441.6 109V102.5" stroke="#5cb8f2" stroke-width="1"/><path d="M441.6 109L435 113" stroke="#5ad37a" stroke-width="1"/><path d="M441.6 109L448.2 113" stroke="#f07272" stroke-width="1"/><rect x="440.1" y="100" width="3" height="3" fill="none" stroke="#5cb8f2" stroke-width="0.9"/><rect x="440.1" y="107.5" width="3" height="3" fill="#3b4453" stroke="#e8e8e8" stroke-width="0.9"/><rect x="433.5" y="112" width="3" height="3" fill="none" stroke="#5ad37a" stroke-width="0.9"/><rect x="446.7" y="112" width="3" height="3" fill="none" stroke="#f07272" stroke-width="0.9"/><path d="M458.5 100.4H473.5V115.8H468" stroke="#5cb8f2" stroke-width="1" fill="none"/><path d="M458.5 100.4V104" stroke="#5cb8f2" stroke-width="1"/><path d="M458.5 107.5H466.5V115.8H458.5Z" stroke="#e0e0e0" stroke-width="1" fill="none"/><path d="M502.2 101.8H492Q485.8 101.8 485.8 107.6Q485.8 113.4 492 113.4H502.2" stroke="#5cb8f2" stroke-width="1.1" fill="none"/><path d="M502.2 104.8H492Q489 104.8 489 107.6Q489 110.4 492 110.4H502.2" stroke="#e0e0e0" stroke-width="1" fill="none"/><path d="M502.2 107.6H493" stroke="#5cb8f2" stroke-width="1"/><rect x="511.5" y="101.4" width="5.3" height="5.3" stroke="#e0e0e0" stroke-width="1" fill="none"/><rect x="519.5" y="101.4" width="5.3" height="5.3" stroke="#5cb8f2" stroke-width="1" fill="none"/><rect x="511.5" y="109.4" width="5.3" height="5.3" stroke="#5cb8f2" stroke-width="1" fill="none"/><rect x="519.5" y="109.4" width="5.3" height="5.3" stroke="#5cb8f2" stroke-width="1" fill="none"/><path d="M532.1 106.2H539.1L535.6 109.8Z" fill="#d8d8d8"/><path d="M490.2 130.0H498.2L494.2 134.0Z" fill="#d8d8d8"/><path d="M568.1 65.2H584.2V75H568.1Z" fill="#d9d9d9"/><path d="M568.1 65.2L574.7 58.9H587.9L584.2 65.2Z" fill="#f2f2f2"/><path d="M585 62.9L597.9 50.9V71L585 83Z" fill="#e2e2e2" stroke="#2b3039" stroke-width="0.6"/><path d="M587.6 64.4L595.5 57.8V69.8L587.6 76.1Z" fill="#8ccbf8" stroke="#2b3039" stroke-width="0.7"/><path d="M594.8 130.0H602.8L598.8 134.0Z" fill="#d8d8d8"/><path d="M609.7 129.5L615.2 135.0M615.2 131.5V135.0H611.7" stroke="#e0e0e0" stroke-width="1.1" fill="none"/><path d="M754.3 129.5L759.8 135.0M759.8 131.5V135.0H756.3" stroke="#e0e0e0" stroke-width="1.1" fill="none"/><path d="M630.5 55.0V66.5H641.5" stroke="#dcdcdc" stroke-width="1.3" fill="none"/><path d="M627.9 56.0L630.5 52.3L633.1 56.0Z M640.5 63.9L644.3 66.5L640.5 69.1Z" fill="#dcdcdc"/><path d="M668.5 55.0V66.5H679.5" stroke="#dcdcdc" stroke-width="1.3" fill="none"/><path d="M665.9 56.0L668.5 52.3L671.1 56.0Z M678.5 63.9L682.3 66.5L678.5 69.1Z" fill="#dcdcdc"/><path d="M697.5 55.0V66.5H708.5" stroke="#dcdcdc" stroke-width="1.3" fill="none"/><path d="M694.9 56.0L697.5 52.3L700.1 56.0Z M707.5 63.9L711.3 66.5L707.5 69.1Z" fill="#dcdcdc"/><path d="M721.5 55.0V66.5H732.5" stroke="#dcdcdc" stroke-width="1.3" fill="none"/><path d="M718.9 56.0L721.5 52.3L724.1 56.0Z M731.5 63.9L735.3 66.5L731.5 69.1Z" fill="#dcdcdc"/><path d="M744.5 55.0V66.5H755.5" stroke="#dcdcdc" stroke-width="1.3" fill="none"/><path d="M741.9 56.0L744.5 52.3L747.1 56.0Z M754.5 63.9L758.3 66.5L754.5 69.1Z" fill="#dcdcdc"/><path d="M630.5 78.0V89.5H641.5" stroke="#dcdcdc" stroke-width="1.3" fill="none"/><path d="M627.9 79.0L630.5 75.3L633.1 79.0Z M640.5 86.9L644.3 89.5L640.5 92.1Z" fill="#dcdcdc"/><path d="M668.5 78.0V89.5H679.5" stroke="#dcdcdc" stroke-width="1.3" fill="none"/><path d="M665.9 79.0L668.5 75.3L671.1 79.0Z M678.5 86.9L682.3 89.5L678.5 92.1Z" fill="#dcdcdc"/><path d="M697.5 78.0V89.5H708.5" stroke="#dcdcdc" stroke-width="1.3" fill="none"/><path d="M694.9 79.0L697.5 75.3L700.1 79.0Z M707.5 86.9L711.3 89.5L707.5 92.1Z" fill="#dcdcdc"/><path d="M721.5 78.0V89.5H732.5" stroke="#dcdcdc" stroke-width="1.3" fill="none"/><path d="M718.9 79.0L721.5 75.3L724.1 79.0Z M731.5 86.9L735.3 89.5L731.5 92.1Z" fill="#dcdcdc"/><path d="M744.5 78.0V89.5H755.5" stroke="#dcdcdc" stroke-width="1.3" fill="none"/><path d="M741.9 79.0L744.5 75.3L747.1 79.0Z M754.5 86.9L758.3 89.5L754.5 92.1Z" fill="#dcdcdc"/><path d="M630.5 102.0V113.5H641.5" stroke="#dcdcdc" stroke-width="1.3" fill="none"/><path d="M627.9 103.0L630.5 99.3L633.1 103.0Z M640.5 110.9L644.3 113.5L640.5 116.1Z" fill="#dcdcdc"/><path d="M668.5 102.0V113.5H679.5" stroke="#dcdcdc" stroke-width="1.3" fill="none"/><path d="M665.9 103.0L668.5 99.3L671.1 103.0Z M678.5 110.9L682.3 113.5L678.5 116.1Z" fill="#dcdcdc"/><circle cx="637.5" cy="55.5" r="4.2" fill="#f7cf6a"/><path d="M635.5 59.5H639.5L637.5 62Z" fill="#f0f0f0"/><rect x="672.5" y="52" width="9" height="11" fill="#f0f0f0"/><rect x="674" y="54" width="6" height="2.5" fill="#5cb8f2"/><path d="M679 59.5H674.5M676 58L674.3 59.5L676 61" stroke="#3b4453" stroke-width="0.9" fill="none"/><path d="M698 65L705.5 57.5" stroke="#dcdcdc" stroke-width="1.1"/><path d="M702.5 56.5H706.5V60.5Z" fill="#dcdcdc"/><rect x="724.5" y="53.5" width="12" height="9.5" fill="#f0f0f0"/><rect x="724.5" y="53.5" width="12" height="2" fill="#a0a0a0"/><path d="M726.5 58H728M729.5 58H734.5M726.5 60.5H728M729.5 60.5H734.5" stroke="#3b4453" stroke-width="0.9"/><circle cx="751.5" cy="57" r="4.6" fill="#5cb8f2"/><path d="M749 54.5Q751 56 749.5 58.5M753 53.5Q754.5 56 755.5 55" stroke="#b9e0fb" stroke-width="1" fill="none"/><path d="M648.2 57.9H655.2L651.7 61.4Z" fill="#d8d8d8"/><path d="M648.2 81.5H655.2L651.7 85.0Z" fill="#d8d8d8"/><path d="M648.2 104.8H655.2L651.7 108.3Z" fill="#d8d8d8"/><circle cx="633.5" cy="82.5" r="2.8" stroke="#f0f0f0" stroke-width="1.1" fill="none"/><path d="M635.5 79L637 80.5" stroke="#f0f0f0" stroke-width="1.2"/><path d="M637.5 77L640.5 80.5M640.5 77L637.5 80.5" stroke="#5cb8f2" stroke-width="0.9"/><path d="M672.5 82.5Q676 78.5 681 80.5V82.5Q677 81 674.5 83.5Z" fill="#5cb8f2"/><path d="M671 82L674.5 78.5V85Z" fill="#5cb8f2"/><path d="M698.5 88.5L705 82" stroke="#dcdcdc" stroke-width="1.1"/><path d="M701.5 81H705.5V85Z" fill="#dcdcdc"/><rect x="696" y="88.5" width="2.5" height="2.5" fill="#5cb8f2"/><path d="M723.5 79.5H729.5L723.5 87.5H729.5" stroke="#5cb8f2" stroke-width="1.2" fill="none"/><text x="746.5" y="88" font-family="Liberation Sans" font-size="11" font-weight="bold" fill="#5cb8f2">3</text><path d="M633.5 103.5V101.5H635.5M640 101.5H642V103.5M633.5 107.5V109.5H635.5M642 107.5V109.5H640" stroke="#dcdcdc" stroke-width="0.9" fill="none"/><rect x="635.5" y="103.5" width="4.5" height="4" fill="none" stroke="#dcdcdc" stroke-width="1"/><circle cx="677.2" cy="105.3" r="4.6" fill="#5cb8f2"/><path d="M675 102.5Q677 104 675.5 107M678.5 101.5Q680 104 681 103" stroke="#b9e0fb" stroke-width="1" fill="none"/><path d="M752.9 105.5H760.9L756.9 109.5Z" fill="#d8d8d8"/><rect x="771" y="52" width="16" height="16" fill="#000"/><circle cx="777.5" cy="63" r="3.8" stroke="#c0c0c0" stroke-width="0.8" fill="none"/><path d="M777.5 55.5H784V62H777.5Z" stroke="#c0c0c0" stroke-width="0.8" fill="none"/><rect x="771" y="76" width="16" height="16" fill="#dcdcdc"/><path d="M774 78.5H786V90H774Z" fill="none" stroke="#a8a8a8" stroke-width="0.6"/><path d="M778 78.5V90M782 78.5V90M774 82.5H786M774 86.5H786" stroke="#a8a8a8" stroke-width="0.6"/><path d="M772.5 77.5V90.5H780.5Z" fill="#3a3a3a"/><rect x="780.5" y="89" width="6" height="3" fill="#fafafa"/><path d="M878.0 58.0H886.0L882.0 62.0Z" fill="#d8d8d8"/><path d="M878.0 82.0H886.0L882.0 86.0Z" fill="#d8d8d8"/><path d="M772 103V100.5H774.5M785.5 100.5H788V103M772 113V115.5H774.5M785.5 115.5H788V113" stroke="#e8e8e8" stroke-width="1" fill="none"/><rect x="774" y="102.5" width="12" height="11" fill="#d9d9d9"/><path d="M776.8 105.2L780 103.8L783.2 105.2V111L780 112.4L776.8 111Z" fill="#8ccbf8"/><path d="M792.5 107.0H798.5L795.5 110.0Z" fill="#d8d8d8"/><path d="M840.0 130.0H848.0L844.0 134.0Z" fill="#d8d8d8"/><path d="M901 82L923.5 59.6V82Z" fill="#dcdcdc"/><path d="M923.5 59.6L932 51.1V73.5L923.5 82Z" fill="#c4c4c4"/><path d="M912.3 82V70.8M912.3 70.8H923.5M927.8 55.4V77.8M923.5 70.8L932 62.3" stroke="#7a7a7a" stroke-width="1" fill="none"/><path d="M901.5 59.6H923.5M901.5 59.6V82M901.5 59.6L910 51.1H932M923.5 59.6L932 51.1M912.3 59.6V70.8M901.5 70.8H912.3M905.8 55.4H927.8M912.3 59.6L920.8 51.1M910 51.1V73M910 73.5L901.5 82M921 51.1V62.3M910 62.3H921" stroke="#5cb8f2" stroke-width="0.9" fill="none"/><path d="M901.5 82L932 51.1" stroke="#5cb8f2" stroke-width="1.1"/><path d="M959 57.8L964.6 51H989L981.3 57.8Z" fill="#f0f0f0"/><path d="M981.3 57.8L989 51V74.2L981.3 81.1Z" fill="#c4c4c4"/><rect x="959" y="57.8" width="22.3" height="23.3" fill="#8ccbf8"/><rect x="959" y="60.3" width="22.3" height="1.5" fill="#2b3039"/><rect x="957.6" y="79" width="3.2" height="3.2" fill="#5cb8f2"/><path d="M969.6 104.2H975.6L972.6 107.2Z" fill="#d8d8d8"/><path d="M1033.4 54L1045.5 61V75L1033.4 82L1021.3 75V61Z" stroke="#d8d8d8" stroke-width="0.9" fill="none"/><path d="M1033.4 67.4V55.5" stroke="#5cb8f2" stroke-width="1"/><path d="M1033.4 67.4L1021.5 75" stroke="#5ad37a" stroke-width="1"/><path d="M1033.4 67.4L1045.3 75" stroke="#f07272" stroke-width="1"/><rect x="1031.2" y="51.2" width="4.4" height="4.4" fill="#3b4453" stroke="#5cb8f2" stroke-width="0.9"/><rect x="1031.2" y="65.2" width="4.4" height="4.4" fill="#3b4453" stroke="#eeeeee" stroke-width="0.9"/><rect x="1018.5" y="73" width="4.4" height="4.4" fill="#3b4453" stroke="#5ad37a" stroke-width="0.9"/><rect x="1044.2" y="73" width="4.4" height="4.4" fill="#3b4453" stroke="#f07272" stroke-width="0.9"/><path d="M1053.6 100.8H1059.6L1056.6 103.8Z" fill="#d8d8d8"/><path d="M1079 72.7L1090.3 61.3H1106L1094.8 72.7Z" fill="#dcdcdc" stroke="#4d586a" stroke-width="0.9"/><path d="M1079 66.6L1090.3 55.2H1106L1094.8 66.6Z" fill="#dcdcdc" stroke="#4d586a" stroke-width="0.9"/><path d="M1079 60.6L1090.3 49H1106L1094.8 60.6Z" fill="#dcdcdc" stroke="#4d586a" stroke-width="0.9"/><rect x="1097.5" y="62.5" width="13.5" height="18.5" fill="#f4f4f4" stroke="#4d586a" stroke-width="0.8"/><rect x="1099.3" y="64.3" width="9.4" height="7.5" fill="#7cc6f8" stroke="#2b3039" stroke-width="0.9"/><path d="M1101 75.5H1108M1102.8 73.8L1101 75.5L1102.8 77.2M1101 78.8H1108M1106.2 77.1L1108 78.8L1106.2 80.5" stroke="#444" stroke-width="0.8" fill="none"/><path d="M1091.5 132.2H1098.5L1095.0 135.8Z" fill="#d8d8d8"/><path d="M1146 49.5H1142.5V75.5H1146M1160 49.5H1163.5V63.5" stroke="#f4f4f4" stroke-width="1.2" fill="none"/><rect x="1148.3" y="52.6" width="9.2" height="6.8" fill="#4f8f6a" stroke="#5ad37a" stroke-width="1"/><circle cx="1152.8" cy="68" r="4.6" fill="#4f8f6a" stroke="#5ad37a" stroke-width="1"/><path d="M1161 64.5V78L1163.8 75.3L1166.3 80.8L1168.6 79.6L1166.2 74.3H1170.6Z" fill="#f6f6f6"/><path d="M1152.5 132.2H1159.5L1156.0 135.8Z" fill="#d8d8d8"/><path d="M1201 53H1215.5V62.5H1233V77H1201Z" fill="#dcdcdc"/><path d="M1213.5 132.2H1220.5L1217.0 135.8Z" fill="#d8d8d8"/></svg>
<div class="a" style="left:0;top:737px;width:1363px;height:30px;background:#232831"></div>
<div class="a" style="left:0;top:765px;width:1363px;height:2px;background:#17191d"></div>
<div class="a" style="left:330px;top:765px;width:36px;height:2px;background:#3a3f48"></div>
<svg width="1363" height="767" style="left:0;top:0"><path d="M3.5 737H62.5Q66 737 67 741L69.5 751Q70.5 755 74 755H15Q11.5 755 10.5 751L8 741Q7 737 3.5 737Z" fill="#2c323c"/><path d="M15.5 738V754M58.5 738V754" stroke="#353b46" stroke-width="1"/><path d="M62.5 737H126Q129.5 737 130.5 741L133 751Q134 755 137.5 755H76Q72.5 755 71.5 751L69 741Q68 737 64.5 737Z" fill="#3b4453"/><path d="M131 737H193Q196.5 737 197.5 741L200 751Q201 755 204.5 755H141Q137.5 755 136.5 751L134 741Q133 737 131 737Z" fill="#2c323c"/><path d="M140 738V754M194 738V754" stroke="#353b46" stroke-width="1"/><path d="M207 738.5H224Q225 738.5 224.5 740L221.5 750Q220.5 752.6 217.5 752.6H202.5L205 741Q205.5 738.5 207 738.5Z" fill="#2c323c"/><path d="M213 742V750M209 746H217" stroke="#c8c8c8" stroke-width="2"/><rect x="853" y="739" width="40" height="24" fill="#3a4251"/><rect x="896" y="739" width="102" height="24" fill="#3a4251"/><rect x="999" y="739" width="63" height="24" fill="#3a4251"/><rect x="1065" y="739" width="72" height="24" fill="#3a4251"/><rect x="1140" y="739" width="39" height="24" fill="#3a4251"/><rect x="1207" y="739" width="24" height="24" fill="#3a4251"/><rect x="1234" y="739" width="76" height="24" fill="#3a4251"/><rect x="1313" y="739" width="48" height="24" fill="#3a4251"/><rect x="897" y="740" width="22" height="22" fill="#5b8ec4"/><rect x="1000" y="740" width="22" height="22" fill="#5b8ec4"/><rect x="1024" y="740" width="22" height="22" fill="#5b8ec4"/><rect x="1181" y="740" width="22" height="22" fill="#5b8ec4"/><path d="M900.5 743V758.5H916M900.5 751.5H906.5V758.5" stroke="#f2f2f2" stroke-width="1.2" fill="none"/><circle cx="929.5" cy="752" r="6" stroke="#dcdcdc" stroke-width="1.1" fill="none"/><path d="M929.5 751.5L937.5 743.5M929 751.5H940" stroke="#dcdcdc" stroke-width="1.1"/><path d="M947.5 749h7l-3.5 3.5z" fill="#d0d0d0"/><path d="M986.5 749h7l-3.5 3.5z" fill="#d0d0d0"/><path d="M1050.5 749h7l-3.5 3.5z" fill="#d0d0d0"/><path d="M1167.5 749h7l-3.5 3.5z" fill="#d0d0d0"/><path d="M970.5 743V758M964 744L977 757" stroke="#4fd36a" stroke-width="1.1"/><path d="M964 744L977 757" stroke="#f06b6b" stroke-width="1.1"/><path d="M970.5 743V758" stroke="#4fd36a" stroke-width="1.1"/><rect x="969" y="749" width="3" height="3" fill="#3a4251" stroke="#f2f2f2" stroke-width="0.9"/><path d="M1003.3 756.5H1019M1003.3 756.5L1014.8 745.4" stroke="#f2f2f2" stroke-width="1.1"/><rect x="1008" y="749" width="2.8" height="2.8" fill="#f2f2f2"/><rect x="1027" y="743.5" width="4.5" height="4.5" stroke="#f2f2f2" stroke-width="1" fill="none"/><path d="M1031.5 745.5H1043V758.5H1029V748" stroke="#f2f2f2" stroke-width="1.1" fill="none"/><path d="M1069 747V743.5H1072.5M1074.5 743.5H1077.5M1080 743.5H1085V747M1085 749.5V753M1085 755.5V759H1081M1078.5 759H1075.5M1073 759H1069V755.5M1069 753V749.5" stroke="#dcdcdc" stroke-width="1" fill="none"/><rect x="1074" y="748.5" width="7" height="6" stroke="#dcdcdc" stroke-width="1" fill="none"/><path d="M1070 744.5L1075 749.5M1070 744.5H1073.5M1070 744.5V748" stroke="#dcdcdc" stroke-width="1" fill="none"/><path d="M1100.5 743L1103 750L1108.5 759L1101 755.5L1093.5 759L1098 750Z" fill="#dcdcdc"/><circle cx="1106" cy="746.5" r="2.6" stroke="#dcdcdc" stroke-width="1" fill="none"/><path d="M1124.5 743L1127 750L1132.5 759L1125 755.5L1117.5 759L1122 750Z" fill="#dcdcdc"/><path d="M1130 742.5L1128 747H1131L1129 751" stroke="#dcdcdc" stroke-width="1.1" fill="none"/><path d="M1158.9 748.8 L1158.9 752.2 L1156.7 752.5 L1156.6 752.8 L1157.9 754.6 L1155.6 756.9 L1153.8 755.6 L1153.4 755.8 L1153.2 757.9 L1149.8 757.9 L1149.5 755.7 L1149.2 755.6 L1147.4 756.9 L1145.1 754.6 L1146.4 752.8 L1146.2 752.4 L1144.1 752.2 L1144.1 748.8 L1146.3 748.5 L1146.4 748.2 L1145.1 746.4 L1147.4 744.1 L1149.2 745.4 L1149.6 745.2 L1149.8 743.1 L1153.2 743.1 L1153.5 745.3 L1153.8 745.4 L1155.6 744.1 L1157.9 746.4 L1156.6 748.2 L1156.8 748.6Z M1154 750.5A2.5 2.5 0 1 0 1149 750.5A2.5 2.5 0 1 0 1154 750.5Z" fill="#dcdcdc" fill-rule="evenodd"/><path d="M1192 743V758.5M1184.5 750.5H1199.5" stroke="#f2f2f2" stroke-width="2"/><rect x="1211" y="743.5" width="6.5" height="6.5" stroke="#dcdcdc" stroke-width="1" fill="none"/><circle cx="1223.6" cy="749.6" r="3.4" stroke="#dcdcdc" stroke-width="1" fill="none"/><path d="M1213.8 758.5H1221.4L1217.6 752.5Z" stroke="#dcdcdc" stroke-width="1" fill="none"/><rect x="1245" y="746.2" width="12" height="6.5" stroke="#dcdcdc" stroke-width="1" fill="none"/><path d="M1248 748.5L1250 750.5M1250 748.5L1248 750.5M1253 748.5H1255V750.5H1253Z" stroke="#dcdcdc" stroke-width="0.7" fill="none"/><path d="M1245 752.7L1241.5 757M1241.3 754.5V757.3H1243.8" stroke="#dcdcdc" stroke-width="0.9" fill="none"/><path d="M1264 743H1274.5L1277 745.5V753.6H1264Z" fill="#2f6fc0"/><path d="M1274.5 743L1277 745.5H1274.5Z" fill="#8fb7e6"/><path d="M1268 743V752M1264 746.5H1277" stroke="#fff" stroke-width="0.9"/><circle cx="1268" cy="746.5" r="1.6" fill="#2f6fc0" stroke="#fff" stroke-width="0.8"/><rect x="1264" y="752.1" width="7" height="4.8" fill="#f4b82a"/><path d="M1270.3 754.7L1273.8 758L1280 751.8" stroke="#3cb55a" stroke-width="2" fill="none"/><path d="M1287.5 745.5H1293.5V750.5H1303V756.8H1287.5Z" stroke="#f2a972" stroke-width="1.2" fill="none"/><rect x="1317.4" y="745.5" width="15.3" height="11" stroke="#dcdcdc" stroke-width="1.1" fill="none"/><path d="M1325.5 751.5L1330 747.5M1327.5 747.3H1330.3V750M1324.5 750.5L1320 754.5M1320 751.8V754.7H1322.8" stroke="#dcdcdc" stroke-width="1.1" fill="none"/><path d="M1341 745H1357M1341 751H1357M1341 757H1357" stroke="#dcdcdc" stroke-width="2"/></svg>
<span class="t" style="left:19.15px;top:739.00px;font-size:12.30px;line-height:14px;color:#d8d8d8;transform:scaleX(1.0640);">Model</span>
<span class="t" style="left:76.78px;top:739.00px;font-size:12.30px;line-height:14px;color:#ffffff;font-weight:bold;transform:scaleX(0.9053);">Layout1</span>
<span class="t" style="left:143.33px;top:739.00px;font-size:12.30px;line-height:14px;color:#d8d8d8;transform:scaleX(0.9860);">Layout2</span>
<span class="t" style="left:855.76px;top:744.00px;font-size:12.50px;line-height:14px;color:#f0f0f0;transform:scaleX(0.8426);">PAPER</span>
</body></html>
